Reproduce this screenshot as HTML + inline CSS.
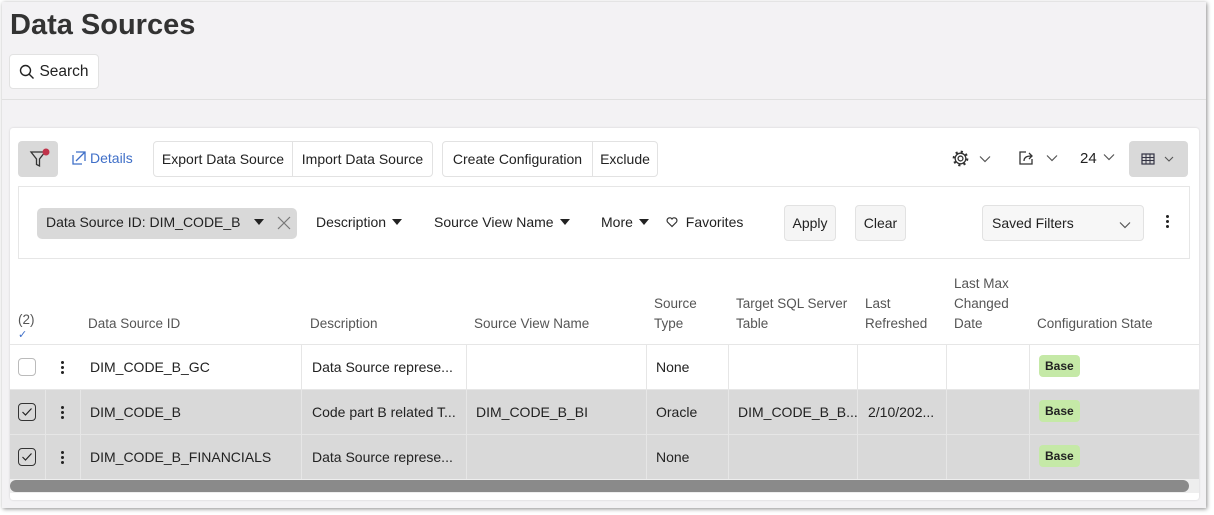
<!DOCTYPE html>
<html><head><style>
*{box-sizing:border-box;margin:0;padding:0}
body{width:1214px;height:515px;background:#fff;font-family:"Liberation Sans",sans-serif;color:#222;position:relative;overflow:hidden}
.page{position:absolute;left:2px;top:2px;width:1204px;height:506px;background:#f3f2f4;box-shadow:1px 1px 4px rgba(0,0,0,.45)}
.abs{position:absolute}
h1{position:absolute;left:8px;top:7px;font-size:29px;font-weight:bold;color:#333}
.btn{position:absolute;background:#fff;border:1px solid #e2e2e2;border-radius:4px;font-size:14px;display:flex;align-items:center;justify-content:center;color:#222}
.card{position:absolute;left:10px;top:128px;width:1189px;height:372px;background:#fff;border-radius:3px;box-shadow:0 0 2px rgba(0,0,0,.15)}
.t{position:absolute;font-size:14px;white-space:nowrap}
.hd{position:absolute;font-size:13.5px;color:#555;line-height:20px}
.row{position:absolute;left:0;width:1189px;height:45px;border-top:1px solid #e6e6e6}
.vl{position:absolute;top:0;bottom:0;width:1px;background:#e6e6e6}
.badge{position:absolute;background:#c5e9a7;border-radius:4px;font-size:12px;font-weight:bold;padding:4px 6px;color:#222}
.cb{position:absolute;width:18px;height:18px;border:1.5px solid #bbb;border-radius:4px;background:#fff}
.cb.on{border-color:#333;background:transparent}
.dot{width:3px;height:3px;background:#222;border-radius:50%;margin-bottom:2px}
.tri{display:inline-block;width:0;height:0;border-left:5px solid transparent;border-right:5px solid transparent;border-top:6px solid #222;vertical-align:2px;margin-left:6px}
.chev{display:inline-block;vertical-align:1px}
</style></head><body>
<div class="page">
<h1>Data Sources</h1>
<div class="btn" style="left:7px;top:52px;width:90px;height:35px;font-size:15.5px"><svg width="16" height="16" viewBox="0 0 16 16" style="margin-right:4px"><circle cx="6.5" cy="6.5" r="5" fill="none" stroke="#222" stroke-width="1.4"/><path d="M10 10l4.5 4.5" stroke="#222" stroke-width="1.4"/></svg>Search</div>
<div class="abs" style="left:0;top:97px;width:1204px;height:1px;background:#e0e0e0"></div>
</div>
<div class="card">
 <div class="abs" style="left:8px;top:13px;width:40px;height:36px;background:#d9d9d9;border-radius:4px"><svg width="40" height="36"><path d="M13 11h14l-5.5 7v7l-3-1.5v-5.5z" fill="none" stroke="#333" stroke-width="1.3"/><circle cx="28" cy="11" r="3.5" fill="#c0334a"/></svg></div>
 <div class="t" style="left:62px;top:22px;color:#3f6fc8;font-size:14px"><svg width="14" height="14" viewBox="0 0 14 14" style="vertical-align:-2px;margin-right:4px"><path d="M1 4v9h9" fill="none" stroke="#3f6fc8" stroke-width="1.3"/><path d="M4 1h9v9M13 1L4 10" fill="none" stroke="#3f6fc8" stroke-width="1.3"/></svg>Details</div>
 <div class="btn" style="left:143px;top:13px;width:140px;height:36px;border-radius:4px 0 0 4px">Export Data Source</div>
 <div class="btn" style="left:282px;top:13px;width:141px;height:36px;border-radius:0 4px 4px 0">Import Data Source</div>
 <div class="btn" style="left:432px;top:13px;width:151px;height:36px;border-radius:4px 0 0 4px">Create Configuration</div>
 <div class="btn" style="left:582px;top:13px;width:66px;height:36px;border-radius:0 4px 4px 0">Exclude</div>
 <div class="t" style="left:942px;top:22px"><svg width="17" height="17" viewBox="0 0 16 16" style="vertical-align:-3px"><circle cx="8" cy="8" r="2.3" fill="none" stroke="#333" stroke-width="1.2"/><circle cx="8" cy="8" r="5" fill="none" stroke="#333" stroke-width="1.2"/><circle cx="8" cy="8" r="6.3" fill="none" stroke="#333" stroke-width="2.2" stroke-dasharray="2 2.95"/></svg><svg class="chev" width="12" height="8" style="margin-left:10px"><path d="M1 1.5l5 5 5-5" fill="none" stroke="#555" stroke-width="1.2"/></svg></div>
 <div class="t" style="left:1008px;top:22px"><svg width="16" height="16" viewBox="0 0 16 16" style="vertical-align:-3px"><path d="M8 2H2v12h12V9" fill="none" stroke="#333" stroke-width="1.3"/><path d="M6 11c0-4 3-5 7-5M11 3l3 3-3 3" fill="none" stroke="#333" stroke-width="1.3"/></svg><svg class="chev" width="12" height="8" style="margin-left:12px"><path d="M1 1.5l5 5 5-5" fill="none" stroke="#555" stroke-width="1.2"/></svg></div>
 <div class="t" style="left:1070px;top:22px;font-size:15px">24 <svg class="chev" width="12" height="8" style="margin-left:2px;vertical-align:2px"><path d="M1 1.5l5 5 5-5" fill="none" stroke="#555" stroke-width="1.2"/></svg></div>
 <div class="abs" style="left:1119px;top:13px;width:59px;height:36px;background:#d9d9d9;border-radius:4px"><svg width="59" height="36"><rect x="13" y="13" width="12" height="10" fill="none" stroke="#334" stroke-width="1.2"/><path d="M13 16.5h12M13 19.5h12M17 13v10M21 13v10" stroke="#334" stroke-width="1"/><path d="M36 16l4 4 4-4" fill="none" stroke="#555" stroke-width="1.1"/></svg></div>
 <div class="abs" style="left:8px;top:58px;width:1172px;height:73px;border:1px solid #e6e6e6"></div>
 <div class="abs" style="left:27px;top:80px;width:260px;height:31px;background:#d9d9d9;border-radius:5px"></div>
 <div class="t" style="left:36px;top:86px">Data Source ID: DIM_CODE_B <span class="tri" style="margin-left:10px"></span></div>
 <div class="abs" style="left:267px;top:88px"><svg width="14" height="14"><path d="M1 1l12 12M13 1L1 13" stroke="#777" stroke-width="1.2"/></svg></div>
 <div class="t" style="left:306px;top:86px">Description<span class="tri"></span></div>
 <div class="t" style="left:424px;top:86px">Source View Name<span class="tri"></span></div>
 <div class="t" style="left:591px;top:86px">More<span class="tri"></span></div>
 <div class="t" style="left:656px;top:86px"><svg width="12" height="12" viewBox="0 0 12 12" style="vertical-align:-1px"><path d="M6 10.5L1.5 6A2.4 2.4 0 016 3 2.4 2.4 0 0110.5 6z" fill="none" stroke="#333" stroke-width="1.2"/></svg>&nbsp; Favorites</div>
 <div class="btn" style="left:774px;top:77px;width:52px;height:36px;background:#f5f5f5">Apply</div>
 <div class="btn" style="left:845px;top:77px;width:51px;height:36px;background:#f5f5f5">Clear</div>
 <div class="btn" style="left:972px;top:77px;width:162px;height:36px;background:#f7f7f7;justify-content:flex-start;padding-left:9px">Saved Filters<svg width="12" height="8" style="position:absolute;right:12px;top:15px"><path d="M1 1.5l5 5 5-5" fill="none" stroke="#555" stroke-width="1.2"/></svg></div>
 <div class="abs" style="left:1156px;top:87px"><div class="dot"></div><div class="dot"></div><div class="dot"></div></div>

 <div class="hd" style="left:8px;top:182px">(2)<br><span style="color:#3f6fc8;font-size:11px;position:relative;top:-6px">&#10003;</span></div>
 <div class="hd" style="left:78px;top:186px">Data Source ID</div>
 <div class="hd" style="left:300px;top:186px">Description</div>
 <div class="hd" style="left:464px;top:186px">Source View Name</div>
 <div class="hd" style="left:644px;top:166px">Source<br>Type</div>
 <div class="hd" style="left:726px;top:166px">Target SQL Server<br>Table</div>
 <div class="hd" style="left:855px;top:166px">Last<br>Refreshed</div>
 <div class="hd" style="left:944px;top:146px">Last Max<br>Changed<br>Date</div>
 <div class="hd" style="left:1027px;top:186px">Configuration State</div>

 <div class="row" style="top:216px;background:#fff">
  <div class="vl" style="left:291px"></div><div class="vl" style="left:456px"></div><div class="vl" style="left:636px"></div><div class="vl" style="left:718px"></div><div class="vl" style="left:847px"></div><div class="vl" style="left:936px"></div><div class="vl" style="left:1019px"></div>
  <div class="cb" style="left:8px;top:13px"></div>
  <div class="abs" style="left:51px;top:16px"><div class="dot"></div><div class="dot"></div><div class="dot"></div></div>
  <div class="t" style="left:80px;top:14px">DIM_CODE_B_GC</div>
  <div class="t" style="left:302px;top:14px">Data Source represe...</div>
  <div class="t" style="left:646px;top:14px">None</div>
  <div class="badge" style="left:1029px;top:10px">Base</div>
 </div>
 <div class="row" style="top:261px;background:#d9d9d9">
  <div class="vl" style="left:35px"></div><div class="vl" style="left:70px"></div><div class="vl" style="left:291px"></div><div class="vl" style="left:456px"></div><div class="vl" style="left:636px"></div><div class="vl" style="left:718px"></div><div class="vl" style="left:847px"></div><div class="vl" style="left:936px"></div><div class="vl" style="left:1019px"></div>
  <div class="cb on" style="left:8px;top:13px"><svg width="16" height="16" style="position:absolute;left:0;top:0"><path d="M3.5 8l3 3 6-6.5" fill="none" stroke="#222" stroke-width="1.2"/></svg></div>
  <div class="abs" style="left:51px;top:16px"><div class="dot"></div><div class="dot"></div><div class="dot"></div></div>
  <div class="t" style="left:80px;top:14px">DIM_CODE_B</div>
  <div class="t" style="left:302px;top:14px">Code part B related T...</div>
  <div class="t" style="left:466px;top:14px">DIM_CODE_B_BI</div>
  <div class="t" style="left:646px;top:14px">Oracle</div>
  <div class="t" style="left:728px;top:14px">DIM_CODE_B_B...</div>
  <div class="t" style="left:858px;top:14px">2/10/202...</div>
  <div class="badge" style="left:1029px;top:10px">Base</div>
 </div>
 <div class="row" style="top:306px;background:#d9d9d9">
  <div class="vl" style="left:35px"></div><div class="vl" style="left:70px"></div><div class="vl" style="left:291px"></div><div class="vl" style="left:456px"></div><div class="vl" style="left:636px"></div><div class="vl" style="left:718px"></div><div class="vl" style="left:847px"></div><div class="vl" style="left:936px"></div><div class="vl" style="left:1019px"></div>
  <div class="cb on" style="left:8px;top:13px"><svg width="16" height="16" style="position:absolute;left:0;top:0"><path d="M3.5 8l3 3 6-6.5" fill="none" stroke="#222" stroke-width="1.2"/></svg></div>
  <div class="abs" style="left:51px;top:16px"><div class="dot"></div><div class="dot"></div><div class="dot"></div></div>
  <div class="t" style="left:80px;top:14px">DIM_CODE_B_FINANCIALS</div>
  <div class="t" style="left:302px;top:14px">Data Source represe...</div>
  <div class="t" style="left:646px;top:14px">None</div>
  <div class="badge" style="left:1029px;top:10px">Base</div>
 </div>
 <div class="abs" style="left:0;top:351px;width:1189px;height:14px;background:#eee"></div>
 <div class="abs" style="left:0;top:352px;width:1179px;height:12px;background:#8a8a8a;border-radius:6px"></div>
</div>
</body></html>
